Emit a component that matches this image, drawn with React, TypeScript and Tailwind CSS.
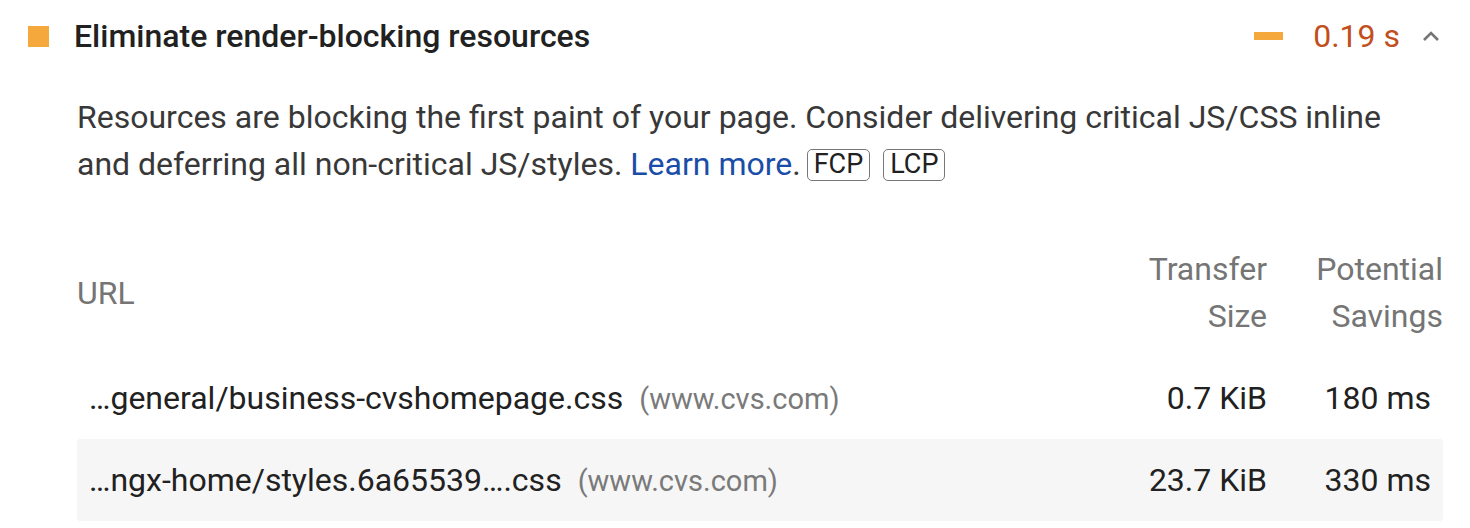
const rows = [
  { url: '…general/business-cvshomepage.css', host: '(www.cvs.com)', size: '0.7 KiB', savings: '180 ms' },
  { url: '…ngx-home/styles.6a65539….css', host: '(www.cvs.com)', size: '23.7 KiB', savings: '330 ms' },
];

function Chevron() {
  return (
    <svg width="18" height="12" viewBox="0 0 18 12" className="text-[#757575]">
      <path d="M2 10 L9 3 L16 10" fill="none" stroke="currentColor" strokeWidth="2.6" />
    </svg>
  );
}

export default function App() {
  return (
    <div
      className="w-[1470px] h-[528px] bg-white overflow-hidden text-[#212121]"
      style={{ fontFamily: 'Roboto, "Liberation Sans", sans-serif' }}
    >
      {/* Audit header */}
      <div className="h-[72px] flex items-center pl-[28px] pr-[30px]">
        <div className="w-[21px] h-[21px] bg-[#f5a93d]" />
        <div className="ml-[25px] text-[32px] font-medium leading-none">Eliminate render-blocking resources</div>
        <div className="ml-auto flex items-center">
          <div className="w-[29px] h-[8px] bg-[#f5a93d]" />
          <div className="ml-[30px] text-[32px] text-[#c24e1c] leading-none">0.19 s</div>
          <div className="ml-[22px] flex items-center">
            <Chevron />
          </div>
        </div>
      </div>

      <div className="pl-[77px] pr-[27px]">
        {/* Description */}
        <p className="mt-[22px] text-[32px] leading-[47px] text-[#383838] whitespace-nowrap">
          Resources are blocking the first paint of your page. Consider delivering critical JS/CSS inline
          <br />
          and deferring all non-critical JS/styles.{' '}
          <span className="text-[#1a4da8]">Learn more</span>.
          <span className="ml-[6px] inline-flex items-center h-[32px] px-[6px] border border-[#777] rounded-[5px] text-[27px] leading-none align-[2px] text-[#212121]">
            FCP
          </span>
          <span className="ml-[13px] inline-flex items-center h-[32px] px-[6px] border border-[#777] rounded-[5px] text-[27px] leading-none align-[2px] text-[#212121]">
            LCP
          </span>
        </p>

        {/* Table */}
        <div className="mt-[58px]">
          <div className="grid grid-cols-[1fr_160px_176px] text-[32px] leading-[47px] text-[#757575] pb-[17px]">
            <div className="flex items-center">URL</div>
            <div className="text-right">
              Transfer
              <br />
              Size
            </div>
            <div className="text-right">
              Potential
              <br />
              Savings
            </div>
          </div>
          {rows.map((r, i) => (
            <div
              key={r.url}
              className={`grid grid-cols-[1fr_160px_176px] h-[82px] items-center text-[32px] rounded-[3px] ${
                i % 2 === 1 ? 'bg-[#f6f6f6]' : ''
              }`}
            >
              <div className="pl-[12px] whitespace-nowrap">
                <span>{r.url}</span>
                <span className="ml-[16px] text-[#7a7a7a] text-[29px]">{r.host}</span>
              </div>
              <div className="text-right">{r.size}</div>
              <div className="text-right pr-[12px]">{r.savings}</div>
            </div>
          ))}
        </div>
      </div>
    </div>
  );
}
